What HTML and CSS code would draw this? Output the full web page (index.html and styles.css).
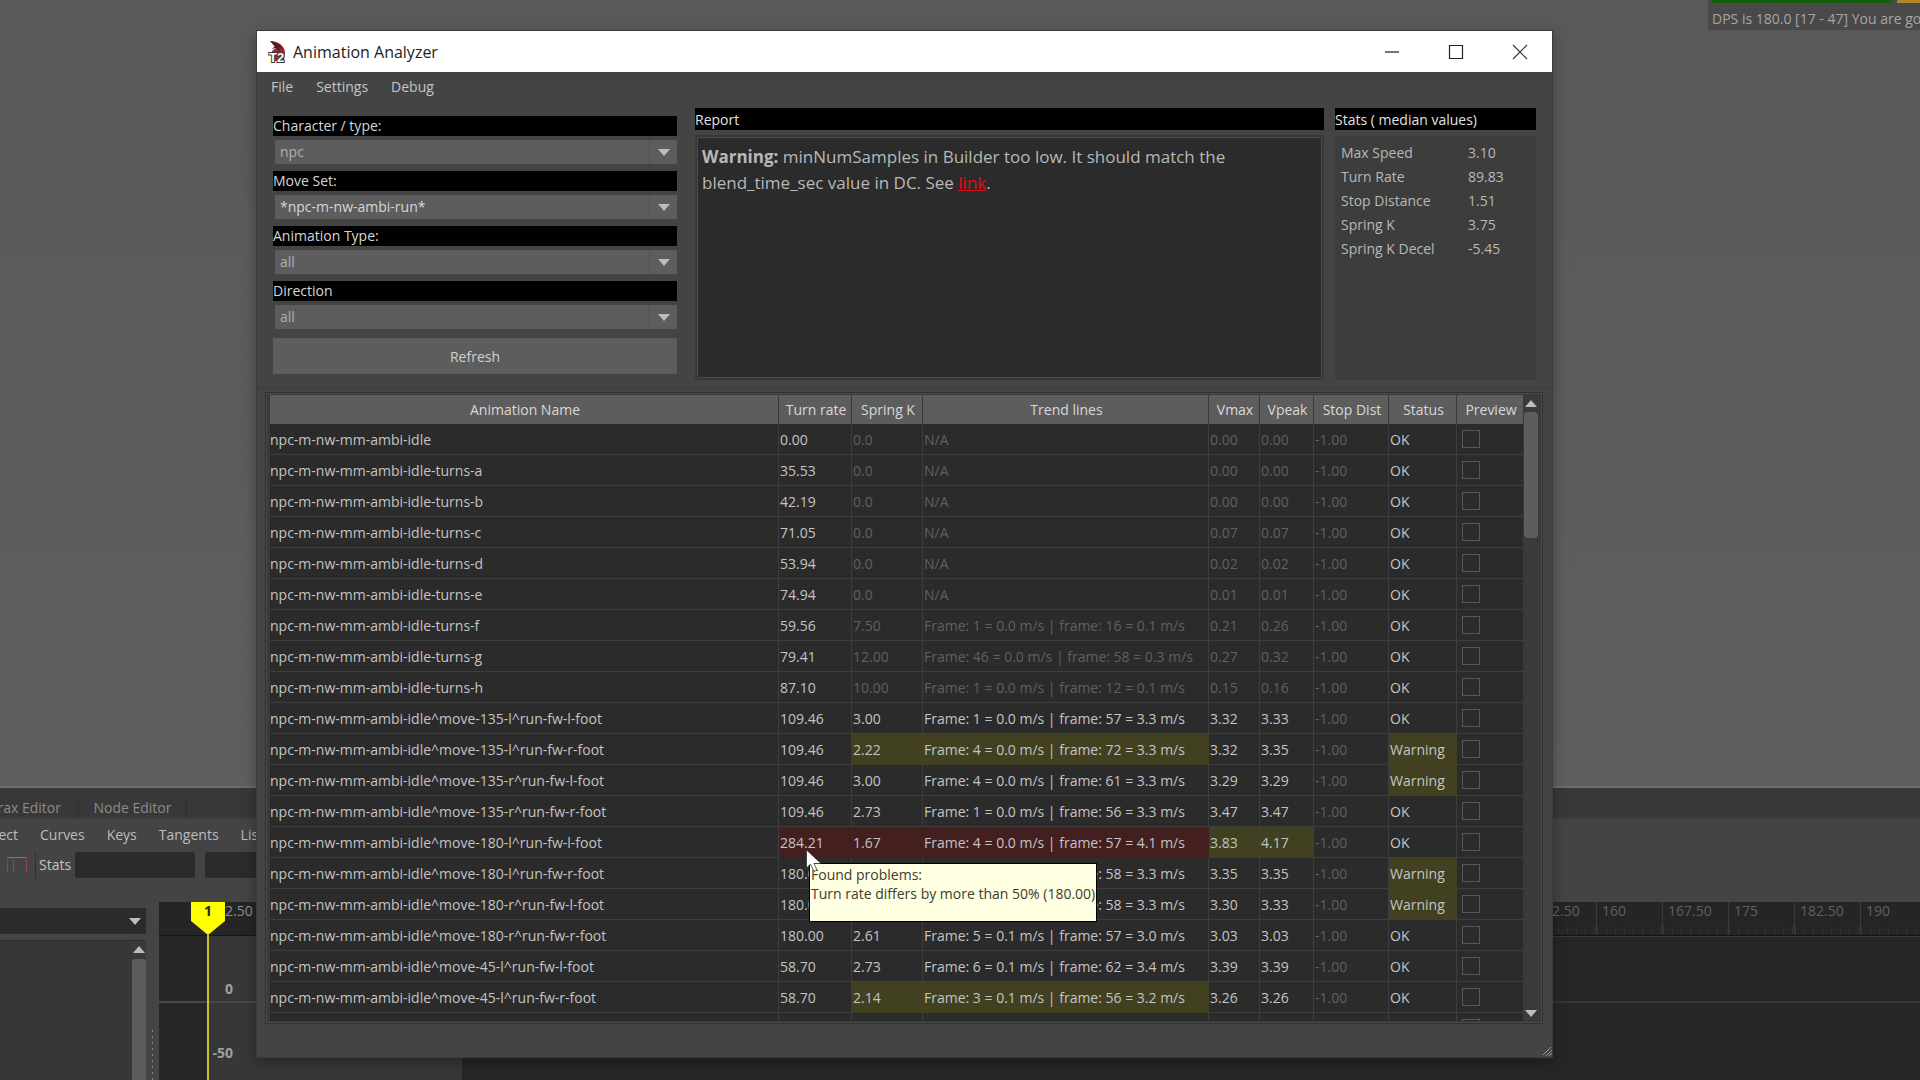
FILE: index.html
```html
<!DOCTYPE html>
<html lang="en">
<head>
<meta charset="utf-8">
<title>Animation Analyzer</title>
<link rel="stylesheet" href="styles.css">
</head>
<body>
<div class="desktop">
  <main class="viewport">
    <div class="hud">
      <div class="hud-bars"><span class="bar-good"></span><span class="bar-warn"></span></div>
      <p class="hud-text">DPS is 180.0 [17 - 47] You are good</p>
    </div>
  </main>
  <section class="editor">
    <div class="tabs"><button class="tab tab-cut">Trax Editor</button><button class="tab">Node Editor</button></div>
    <nav class="editor-menu"><a href="#" class="cut">Select</a><a href="#">Curves</a><a href="#">Keys</a><a href="#">Tangents</a><a href="#">List</a></nav>
    <div class="toolbar">
      <svg class="tool-icon" width="22" height="18" viewBox="0 0 22 18" fill="none"><path d="M1 1.5h19" stroke="#96706e"/><path d="M1.500 1v16M7.500 1v16M20.500 1v16" stroke="#8c4643"/></svg>
      <label class="tool-label" for="stat-a">Stats</label>
      <input id="stat-a" class="stat-input" type="text">
      <input class="stat-input" type="text" aria-label="Value">
    </div>
    <div class="graph-area">
      <aside class="outliner">
        <div class="outliner-combo"><i class="tri-down"></i></div>
        <div class="outliner-tree"><div class="side-scroll"><i class="tri-up"></i><div class="side-thumb"></div></div></div>
      </aside>
      <div class="splitter"></div>
      <div class="graph">
        <div class="ruler">
          <span class="ruler-start">2.50</span>
          <div class="ruler-cells"><span>152.50</span><span>160</span><span>167.50</span><span>175</span><span>182.50</span><span>190</span></div>
        </div>
        <div class="plot">
          <div class="plot-range">
            <div class="axis"><span>0</span><span>-50</span></div>
          </div>
          <div class="plot-rest"></div>
        </div>
        <div class="marker">
          <svg width="34" height="33" viewBox="0 0 34 33"><path d="M0 0h34v19L17 33 0 19z" fill="#ff0"/></svg>
          <span class="marker-num">1</span>
          <div class="marker-line"></div>
        </div>
      </div>
    </div>
  </section>

  <div class="dialog">
    <header class="titlebar">
      <svg class="logo" width="20" height="24" viewBox="0 0 20 24"><path d="M2 1c9 0 14 5 15 11l-1 9H5L4 11 8 8z" fill="#a32438"/><path d="M2 1c7 1 11 4 13 9l-4-3 1 5-4-4-4 1 3-3z" fill="#5c1620"/><text class="logo-text" x="1" y="22">T2</text></svg>
      <h1 class="title">Animation Analyzer</h1>
      <div class="win-buttons">
        <button aria-label="Minimize"><svg width="16" height="16" viewBox="0 0 16 16"><path d="M1 8h14" stroke="#444" stroke-width="1.500"/></svg></button>
        <button aria-label="Maximize"><svg width="16" height="16" viewBox="0 0 16 16"><path d="M1.500 1.500h13v13h-13z" stroke="#222" stroke-width="1.200" fill="none"/></svg></button>
        <button aria-label="Close"><svg width="16" height="16" viewBox="0 0 16 16"><path d="M1 1l14 14M15 1L1 15" stroke="#333" stroke-width="1.200"/></svg></button>
      </div>
    </header>
    <nav class="menu"><a href="#">File</a><a href="#">Settings</a><a href="#">Debug</a></nav>
    <div class="top">
      <form class="filters">
        <label for="character">Character / type:</label>
        <div class="combo"><select id="character"><option>npc</option></select></div>
        <label for="moveset">Move Set:</label>
        <div class="combo combo-edit"><select id="moveset"><option>*npc-m-nw-ambi-run*</option></select></div>
        <label for="animtype">Animation Type:</label>
        <div class="combo"><select id="animtype"><option>all</option></select></div>
        <label for="direction">Direction</label>
        <div class="combo"><select id="direction"><option>all</option></select></div>
        <button type="button" class="refresh">Refresh</button>
      </form>
      <section class="report">
        <h2 class="heading">Report</h2>
        <div class="report-box"><p><b>Warning:</b> minNumSamples in Builder too low. It should match the blend_time_sec value in DC. See <a href="#">link</a>.</p></div>
      </section>
      <section class="stats">
        <h2 class="heading">Stats ( median values)</h2>
        <dl class="stats-list">
          <dt>Max Speed</dt><dd>3.10</dd>
          <dt>Turn Rate</dt><dd>89.83</dd>
          <dt>Stop Distance</dt><dd>1.51</dd>
          <dt>Spring K</dt><dd>3.75</dd>
          <dt>Spring K Decel</dt><dd>-5.45</dd>
        </dl>
      </section>
    </div>
    <div class="table-frame">
      <div class="table-view">
        <table class="grid">
          <colgroup><col><col class="c-turn"><col class="c-spring"><col class="c-trend"><col class="c-vmax"><col class="c-vpeak"><col class="c-stop"><col class="c-status"><col class="c-preview"></colgroup>
          <thead><tr><th>Animation Name</th><th>Turn rate</th><th>Spring K</th><th>Trend lines</th><th>Vmax</th><th>Vpeak</th><th>Stop Dist</th><th>Status</th><th>Preview</th></tr></thead>
          <tbody>
            <tr class="idle"><td>npc-m-nw-mm-ambi-idle</td><td>0.00</td><td>0.0</td><td>N/A</td><td>0.00</td><td>0.00</td><td>-1.00</td><td>OK</td><td><input type="checkbox" aria-label="Preview"></td></tr>
            <tr class="idle"><td>npc-m-nw-mm-ambi-idle-turns-a</td><td>35.53</td><td>0.0</td><td>N/A</td><td>0.00</td><td>0.00</td><td>-1.00</td><td>OK</td><td><input type="checkbox" aria-label="Preview"></td></tr>
            <tr class="idle"><td>npc-m-nw-mm-ambi-idle-turns-b</td><td>42.19</td><td>0.0</td><td>N/A</td><td>0.00</td><td>0.00</td><td>-1.00</td><td>OK</td><td><input type="checkbox" aria-label="Preview"></td></tr>
            <tr class="idle"><td>npc-m-nw-mm-ambi-idle-turns-c</td><td>71.05</td><td>0.0</td><td>N/A</td><td>0.07</td><td>0.07</td><td>-1.00</td><td>OK</td><td><input type="checkbox" aria-label="Preview"></td></tr>
            <tr class="idle"><td>npc-m-nw-mm-ambi-idle-turns-d</td><td>53.94</td><td>0.0</td><td>N/A</td><td>0.02</td><td>0.02</td><td>-1.00</td><td>OK</td><td><input type="checkbox" aria-label="Preview"></td></tr>
            <tr class="idle"><td>npc-m-nw-mm-ambi-idle-turns-e</td><td>74.94</td><td>0.0</td><td>N/A</td><td>0.01</td><td>0.01</td><td>-1.00</td><td>OK</td><td><input type="checkbox" aria-label="Preview"></td></tr>
            <tr class="idle"><td>npc-m-nw-mm-ambi-idle-turns-f</td><td>59.56</td><td>7.50</td><td>Frame: 1 = 0.0 m/s | frame: 16 = 0.1 m/s</td><td>0.21</td><td>0.26</td><td>-1.00</td><td>OK</td><td><input type="checkbox" aria-label="Preview"></td></tr>
            <tr class="idle"><td>npc-m-nw-mm-ambi-idle-turns-g</td><td>79.41</td><td>12.00</td><td>Frame: 46 = 0.0 m/s | frame: 58 = 0.3 m/s</td><td>0.27</td><td>0.32</td><td>-1.00</td><td>OK</td><td><input type="checkbox" aria-label="Preview"></td></tr>
            <tr class="idle"><td>npc-m-nw-mm-ambi-idle-turns-h</td><td>87.10</td><td>10.00</td><td>Frame: 1 = 0.0 m/s | frame: 12 = 0.1 m/s</td><td>0.15</td><td>0.16</td><td>-1.00</td><td>OK</td><td><input type="checkbox" aria-label="Preview"></td></tr>
            <tr><td>npc-m-nw-mm-ambi-idle^move-135-l^run-fw-l-foot</td><td>109.46</td><td>3.00</td><td>Frame: 1 = 0.0 m/s | frame: 57 = 3.3 m/s</td><td>3.32</td><td>3.33</td><td>-1.00</td><td>OK</td><td><input type="checkbox" aria-label="Preview"></td></tr>
            <tr><td>npc-m-nw-mm-ambi-idle^move-135-l^run-fw-r-foot</td><td>109.46</td><td class="warn">2.22</td><td class="warn">Frame: 4 = 0.0 m/s | frame: 72 = 3.3 m/s</td><td>3.32</td><td>3.35</td><td>-1.00</td><td class="warn">Warning</td><td><input type="checkbox" aria-label="Preview"></td></tr>
            <tr><td>npc-m-nw-mm-ambi-idle^move-135-r^run-fw-l-foot</td><td>109.46</td><td>3.00</td><td>Frame: 4 = 0.0 m/s | frame: 61 = 3.3 m/s</td><td>3.29</td><td>3.29</td><td>-1.00</td><td class="warn">Warning</td><td><input type="checkbox" aria-label="Preview"></td></tr>
            <tr><td>npc-m-nw-mm-ambi-idle^move-135-r^run-fw-r-foot</td><td>109.46</td><td>2.73</td><td>Frame: 1 = 0.0 m/s | frame: 56 = 3.3 m/s</td><td>3.47</td><td>3.47</td><td>-1.00</td><td>OK</td><td><input type="checkbox" aria-label="Preview"></td></tr>
            <tr><td>npc-m-nw-mm-ambi-idle^move-180-l^run-fw-l-foot</td><td class="error">284.21</td><td class="error">1.67</td><td class="error">Frame: 4 = 0.0 m/s | frame: 57 = 4.1 m/s</td><td class="warn">3.83</td><td class="warn">4.17</td><td>-1.00</td><td>OK</td><td><input type="checkbox" aria-label="Preview"></td></tr>
            <tr><td>npc-m-nw-mm-ambi-idle^move-180-l^run-fw-r-foot</td><td>180.00</td><td>2.50</td><td>Frame: 4 = 0.0 m/s | frame: 58 = 3.3 m/s</td><td>3.35</td><td>3.35</td><td>-1.00</td><td class="warn">Warning</td><td><input type="checkbox" aria-label="Preview"></td></tr>
            <tr><td>npc-m-nw-mm-ambi-idle^move-180-r^run-fw-l-foot</td><td>180.00</td><td>2.50</td><td>Frame: 4 = 0.0 m/s | frame: 58 = 3.3 m/s</td><td>3.30</td><td>3.33</td><td>-1.00</td><td class="warn">Warning</td><td><input type="checkbox" aria-label="Preview"></td></tr>
            <tr><td>npc-m-nw-mm-ambi-idle^move-180-r^run-fw-r-foot</td><td>180.00</td><td>2.61</td><td>Frame: 5 = 0.1 m/s | frame: 57 = 3.0 m/s</td><td>3.03</td><td>3.03</td><td>-1.00</td><td>OK</td><td><input type="checkbox" aria-label="Preview"></td></tr>
            <tr><td>npc-m-nw-mm-ambi-idle^move-45-l^run-fw-l-foot</td><td>58.70</td><td>2.73</td><td>Frame: 6 = 0.1 m/s | frame: 62 = 3.4 m/s</td><td>3.39</td><td>3.39</td><td>-1.00</td><td>OK</td><td><input type="checkbox" aria-label="Preview"></td></tr>
            <tr><td>npc-m-nw-mm-ambi-idle^move-45-l^run-fw-r-foot</td><td>58.70</td><td class="warn">2.14</td><td class="warn">Frame: 3 = 0.1 m/s | frame: 56 = 3.2 m/s</td><td>3.26</td><td>3.26</td><td>-1.00</td><td>OK</td><td><input type="checkbox" aria-label="Preview"></td></tr>
            <tr><td></td><td></td><td></td><td></td><td></td><td></td><td></td><td></td><td><input type="checkbox" aria-label="Preview"></td></tr>
          </tbody>
        </table>
      </div>
      <div class="scrollbar"><i class="tri-up"></i><div class="track"><div class="thumb"></div></div><i class="tri-down"></i></div>
    </div>
    <svg class="grip" width="9" height="9" viewBox="0 0 9 9"><path d="M0 8L8 0M3 9l6-6M6 9l3-3" stroke="#999"/></svg>
    <div class="tooltip" role="tooltip">Found problems:<br>Turn rate differs by more than 50% (180.00)</div>
    <svg class="cursor" width="16" height="24" viewBox="0 0 16 24"><path d="M.5 1v18l4-4 3.500 7.500 3-1.500L8 14.500h7z" fill="#fff" stroke="#333" stroke-width=".8"/></svg>
  </div>
</div>
</body>
</html>
```
FILE: styles.css
```css
* { box-sizing: border-box; }
body {
  margin: 0;
  font: 14px/20px "Open Sans", "Noto Sans", sans-serif;
  color: #c4c4c4;
  background: #5b5b5b;
}
h1, h2, p, dl, dd { margin: 0; font-weight: 400; }
a { color: inherit; text-decoration: none; }
button, input, select { font: inherit; color: inherit; border: 0; border-radius: 0; padding: 0; margin: 0; }

.desktop {
  position: relative;
  display: flex;
  flex-direction: column;
  height: 100vh;
  overflow: hidden;
}

/* Host application behind the dialog */
.viewport {
  flex: 1;
  display: flex;
  justify-content: flex-end;
  align-items: flex-start;
  background: linear-gradient(#595959, #5f5f5f);
  border-bottom: 2px solid #6c6c6c;
}
.hud { width: 212px; height: 30px; padding-left: 4px; background: #494949; overflow: hidden; }
.hud-bars { display: flex; gap: 6px; height: 3px; }
.bar-good { width: 179px; background: #135e0c; }
.bar-warn { flex: 1; background: #b38329; }
.hud-text { padding-top: 6px; white-space: nowrap; color: #a5a5a5; }

.editor { height: 292px; display: flex; flex-direction: column; background: #444; }
.tabs { display: flex; height: 31px; padding-top: 10px; background: #383838; border-bottom: 1px solid #404040; }
.tab { width: 108px; background: none; color: #8c8c8c; border-right: 1px solid #303030; }
.tab-cut { width: 79px; padding-right: 17px; direction: rtl; white-space: nowrap; overflow: hidden; }
.editor-menu { display: flex; gap: 22px; height: 30px; padding-top: 6px; color: #bcbcbc; }
.editor-menu .cut { width: 18px; display: flex; justify-content: flex-end; }
.toolbar { display: flex; align-items: center; height: 38px; }
.tool-icon { margin-left: 6px; flex: none; }
.tool-label { width: 40px; margin-left: 7px; padding-left: 3px; border-left: 1px solid #303030; line-height: 28px; }
.stat-input { width: 120px; height: 26px; margin-right: 10px; background: #2b2b2b; border-radius: 3px; }

.graph-area { display: flex; flex: 1; padding-top: 20px; }
.outliner { width: 146px; padding-top: 6px; }
.outliner-combo { display: flex; justify-content: flex-end; align-items: center; height: 26px; padding-right: 5px; background: #2b2b2b; }
.outliner-tree { display: flex; justify-content: flex-end; height: 140px; margin-top: 6px; background: #373737; border-top: 1px solid #2e2e2e; }
.side-scroll { display: flex; flex-direction: column; align-items: center; gap: 6px; width: 14px; padding-top: 5px; background: #3a3a3a; }
.side-thumb { width: 14px; flex: 1; background: #5d5d5d; border-radius: 3px 3px 0 0; }
.splitter { width: 13px; margin-top: 126px; background: radial-gradient(circle, #888 1px, transparent 1px) 0 0 / 13px 6px; }
.graph { position: relative; flex: 1; display: flex; flex-direction: column; background: #262626; }
.ruler { display: flex; justify-content: space-between; height: 34px; padding-left: 66px; background: #252525; border-bottom: 1px solid #151515; box-shadow: 0 1px #3a3a3a; line-height: 17px; }
.ruler-start { color: #909090; }
.ruler-cells { display: flex; color: #606060; }
.ruler-cells span {
  width: 66px;
  padding-left: 5px;
  border-left: 1px solid #3a3a3a;
  background: repeating-linear-gradient(90deg, #343434 0 1px, transparent 1px 9px) 0 24px / 100% 8px no-repeat;
}
.ruler-cells span:last-child { width: 60px; }
.plot { flex: 1; display: flex; background: linear-gradient(#353535, #353535) 0 65px / 100% 2px no-repeat; }
.plot-range { width: 303px; background: linear-gradient(#484848, #484848) 0 65px / 100% 2px no-repeat, linear-gradient(90deg, #262626 48px, transparent 48px), #373737; }
.axis { display: flex; flex-direction: column; align-items: flex-end; gap: 44px; width: 74px; padding-top: 43px; font-weight: 700; color: #a0a0a0; }
.marker { position: absolute; left: 32px; top: 0; bottom: 0; width: 34px; display: flex; flex-direction: column; align-items: center; }
.marker svg { flex: none; }
.marker-num { position: absolute; top: -1px; font-weight: 700; color: #222; }
.marker-line { flex: 1; width: 2px; background: #c5c52c; }

/* Arrow heads */
.tri-down, .tri-up { width: 0; height: 0; border: 6px solid transparent; flex: none; }
.tri-down { border-top: 7px solid #bdbdbd; border-bottom: 0; }
.tri-up { border-bottom: 7px solid #bdbdbd; border-top: 0; }

/* Dialog */
.dialog {
  position: absolute;
  inset: 31px 368px 23px 257px;
  display: flex;
  flex-direction: column;
  background: #444;
  box-shadow: 0 0 0 1px #3c3c3c, 0 4px 14px rgba(0, 0, 0, .35);
}
.titlebar { display: flex; align-items: center; height: 41px; padding-left: 11px; background: #fff; color: #1c1c1c; }
.logo-text { font: 700 13px "Liberation Sans", sans-serif; fill: #fff; stroke: #3a3a3a; stroke-width: 2px; paint-order: stroke; }
.title { flex: 1; padding-left: 5px; font-size: 16px; }
.win-buttons { display: flex; }
.win-buttons button { display: flex; align-items: center; justify-content: center; width: 64px; height: 40px; background: none; }
.menu { display: flex; gap: 23px; height: 36px; padding: 5px 14px; }

.top { display: flex; height: 281px; padding: 0 16px; border-bottom: 1px solid #3c3c3c; }
.filters { width: 404px; padding-top: 8px; display: flex; flex-direction: column; }
.filters label { height: 20px; background: #000; color: #d6d6d6; line-height: 20px; }
.combo { position: relative; height: 24px; margin: 4px 0 7px; padding-left: 2px; color: #b0b0b0; }
.combo-edit { color: #d6d6d6; }
.combo select { appearance: none; width: 100%; height: 24px; padding-left: 5px; background: linear-gradient(#505050, #505050) right 27px top 0 / 1px 100% no-repeat, #5d5d5d; }
.combo::after { content: ""; position: absolute; right: 7px; top: 9px; border: 6px solid transparent; border-top: 7px solid #bdbdbd; border-bottom: 0; }
.refresh { height: 36px; margin-top: 2px; padding-top: 1px; background: #5d5d5d; color: #d0d0d0; }
.report { flex: 1; margin-left: 18px; }
.heading { height: 22px; font-size: 14px; line-height: 24px; background: #000; color: #e0e0e0; }
.report-box { height: 245px; margin-top: 5px; padding: 7px 5px; background: #2b2b2b; border: 2px solid #383838; outline: 1px solid #4a4a4a; outline-offset: -3px; font-size: 17px; line-height: 26px; color: #b8b8b8; }
.report-box a { color: #e00f17; text-decoration: underline; }
.stats { width: 201px; margin-left: 11px; }
.stats-list { display: grid; grid-template-columns: 127px 1fr; grid-auto-rows: 24px; align-content: start; height: 244px; margin-top: 6px; padding: 4px 6px; background: #3d3d3d; line-height: 25px; color: #b8b8b8; }

.table-frame { display: flex; flex: 1; margin: 3px 9px 33px 8px; padding: 2px 3px 2px 4px; min-height: 0; background: #3a3a3a; border: 1px solid #313131; box-shadow: inset 0 0 0 1px #4a4a4a; }
.table-view { flex: 1; overflow: hidden; background: #2b2b2b; }
.grid { width: 100%; table-layout: fixed; border-collapse: separate; border-spacing: 0; white-space: nowrap; }
.grid th { height: 29px; padding: 0 0 0 2px; font-weight: 400; color: #d8d8d8; background: #5d5d5d; border-right: 1px solid #3a3a3a; }
.grid td { height: 31px; padding: 2px 0 0 1px; border-right: 1px solid #3e3e3e; border-bottom: 1px solid #3e3e3e; }
.grid td:first-child { padding-left: 0; }
.grid td:last-child { padding-top: 0; }
.grid th:last-child, .grid td:last-child { border-right: 0; }
.c-turn { width: 73px; }
.c-spring { width: 71px; }
.c-trend { width: 286px; }
.c-vmax { width: 51px; }
.c-vpeak { width: 54px; }
.c-stop { width: 75px; }
.c-status { width: 68px; }
.c-preview { width: 66px; }
.idle td:nth-child(n+3):nth-child(-n+6), .grid td:nth-child(7) { color: #606060; }
.grid td.warn { background: #414021; border-color: #414021; }
.grid td.error { background: #431f20; border-color: #431f20; }
.grid input { appearance: none; display: block; width: 18px; height: 18px; margin-left: 4px; border: 1px solid #575757; }
.scrollbar { display: flex; flex-direction: column; align-items: center; width: 16px; padding: 5px 0 4px; }
.track { flex: 1; width: 14px; padding-top: 5px; }
.thumb { height: 21%; background: #5d5d5d; border-radius: 4px; }

.grip { position: absolute; right: 0; bottom: 1px; }
.tooltip { position: absolute; left: 552px; top: 832px; height: 59px; padding: 1px; font-size: 14px; line-height: 19px; white-space: nowrap; color: #3c3c30; background: #ffffe1; border: 1px solid #000; }
.cursor { position: absolute; left: 549px; top: 818px; }
```
